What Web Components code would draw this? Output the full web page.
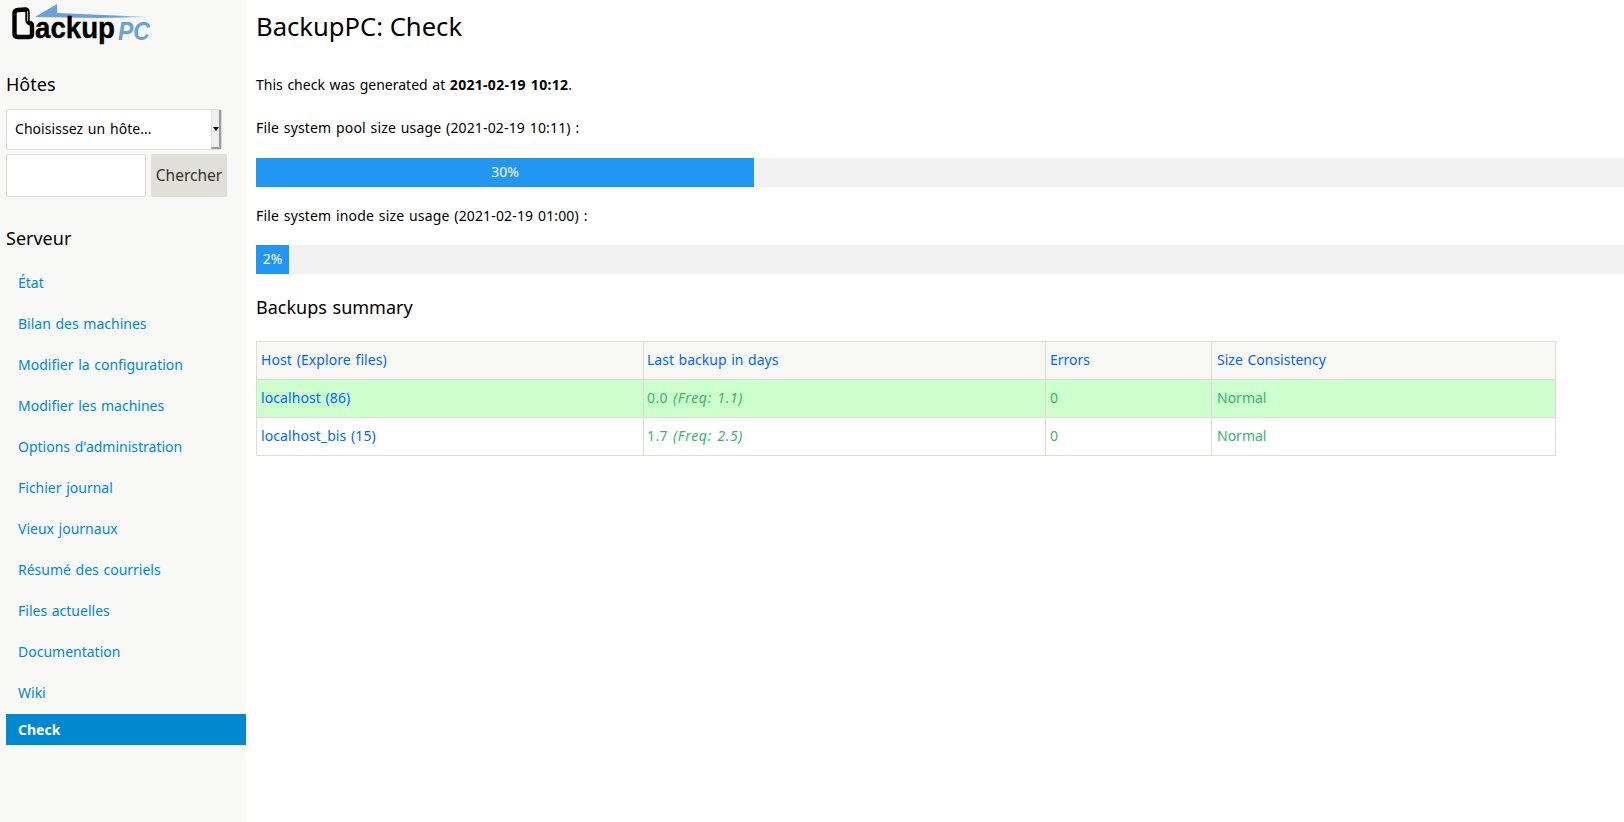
<!doctype html>
<html>
<head>
<meta charset="utf-8">
<title>BackupPC: Check</title>
<style>
  html, body { margin: 0; height: 100%; }
  body { font-family: "Noto Sans", sans-serif; font-size: 14px; word-spacing: 1px; color: #000; background: #fff; }
</style>
</head>
<body>
<bpc-app>
  <bpc-sidebar slot="side">
    <bpc-logo></bpc-logo>
    <bpc-heading>Hôtes</bpc-heading>
    <bpc-host-form></bpc-host-form>
    <bpc-heading style="padding-bottom:17px">Serveur</bpc-heading>
    <bpc-nav-item>État</bpc-nav-item>
    <bpc-nav-item>Bilan des machines</bpc-nav-item>
    <bpc-nav-item>Modifier la configuration</bpc-nav-item>
    <bpc-nav-item>Modifier les machines</bpc-nav-item>
    <bpc-nav-item>Options d'administration</bpc-nav-item>
    <bpc-nav-item>Fichier journal</bpc-nav-item>
    <bpc-nav-item>Vieux journaux</bpc-nav-item>
    <bpc-nav-item>Résumé des courriels</bpc-nav-item>
    <bpc-nav-item>Files actuelles</bpc-nav-item>
    <bpc-nav-item>Documentation</bpc-nav-item>
    <bpc-nav-item>Wiki</bpc-nav-item>
    <bpc-nav-item active>Check</bpc-nav-item>
  </bpc-sidebar>
  <bpc-check-page></bpc-check-page>
</bpc-app>
<script>
// small helper, every component below is just a style + markup string
class Base extends HTMLElement {
  connectedCallback() {
    if (this.shadowRoot) return;
    this.attachShadow({ mode: "open" });
    this.shadowRoot.innerHTML = this.render();
  }
}

class BpcApp extends Base {
  render() {
    return `
      <style>
        :host { display: flex; width: 100%; height: 822px; overflow: hidden; }
        .main { flex: 1; min-width: 0; }
      </style>
      <slot name="side"></slot>
      <div class="main"><slot></slot></div>
    `;
  }
}

class BpcSidebar extends Base {
  render() {
    return `
      <style>
        :host { display: block; box-sizing: border-box; width: 246px; flex: none; height: 822px; padding-left: 6px; background: #f8f8f6; }
      </style>
      <slot></slot>
    `;
  }
}

class BpcLogo extends Base {
  render() {
    return `
      <style>
        :host { display: block; height: 50px; margin-left: -6px; }
        svg { display: block; }
        text { font-family: "Liberation Sans", sans-serif; font-weight: 700; word-spacing: 0; }
      </style>
      <svg width="160" height="50" viewBox="0 0 160 50">
        <defs>
          <linearGradient id="wedge" x1="0" x2="1" y1="0" y2="0">
            <stop offset="0" stop-color="#6a9fd8"/>
            <stop offset="0.7" stop-color="#6a9fd8"/>
            <stop offset="1" stop-color="#c4d8ee"/>
          </linearGradient>
        </defs>
        <path d="M35 17 L57 4 L57 13 L150 17 L100 18 Z" fill="url(#wedge)"/>
        <path d="M14.5 13 V34 Q14.5 37 18 37 H29 Q32 37 32 34 V26 Q32 23 29 23 Q27.5 22 27.5 20 V12 Q27.5 9.5 25 9.5 L18 10 Q14.5 10.5 14.5 13 Z" fill="none" stroke="#000" stroke-width="4.4" stroke-linejoin="round"/>
        <path d="M27.6 11 V21" stroke="#fff" stroke-width="0.8"/>
        <text x="35" y="38" font-size="30" fill="#000" stroke="#000" stroke-width="0.4" textLength="80" lengthAdjust="spacingAndGlyphs">ackup</text>
        <text x="118" y="40" font-size="26" font-style="italic" fill="#6a9fd8" textLength="32" lengthAdjust="spacingAndGlyphs">PC</text>
      </svg>
    `;
  }
}

class BpcHeading extends Base {
  render() {
    return `
      <style>
        :host { display: block; font-size: 18px; line-height: 24px; color: #000; padding-top: 22px; padding-bottom: 13px; word-spacing: 0; }
      </style>
      <slot></slot>
    `;
  }
}

class BpcHostForm extends Base {
  render() {
    return `
      <style>
        :host { display: flex; flex-direction: column; gap: 4px; padding-bottom: 7px; }
        .select { box-sizing: border-box; width: 216px; height: 41px; display: flex; align-items: center; background: #fff; border: 1px solid #dcdcdc; border-radius: 2px; }
        .select span { flex: 1; padding-left: 8px; padding-bottom: 2px; font-size: 14px; letter-spacing: .05px; }
        .arrow { box-sizing: border-box; width: 10px; height: 39px; background: #f0f0f0; border-left: 1px solid #e0e0e0; border-right: 2px solid #9a9a9a; border-bottom: 2px solid #9a9a9a; display: flex; align-items: center; justify-content: center; }
        .arrow i { width: 0; height: 0; border: 3px solid transparent; border-top: 4px solid #000; border-bottom: 0; }
        .row { display: flex; gap: 5px; }
        .input { box-sizing: border-box; width: 140px; height: 43px; background: #fff; border: 1px solid #dcdcdc; border-radius: 2px; }
        .btn { box-sizing: border-box; width: 76px; height: 43px; padding-bottom: 2px; display: flex; align-items: center; justify-content: center; background: #e0e0d8; border-radius: 2px; color: #333; font-size: 15.5px; }
      </style>
      <div class="select"><span>Choisissez un hôte...</span><div class="arrow"><i></i></div></div>
      <div class="row"><div class="input"></div><div class="btn">Chercher</div></div>
    `;
  }
}

class BpcNavItem extends Base {
  render() {
    return `
      <style>
        :host { display: block; box-sizing: border-box; height: 31px; line-height: 31px; margin-bottom: 10px; padding-left: 12px; color: #0088d0; font-size: 14px; white-space: nowrap; }
        :host([active]) { margin-top: -4px; background: #0088d0; color: #fff; font-weight: 700; }
      </style>
      <slot></slot>
    `;
  }
}

class BpcProgress extends Base {
  render() {
    const w = this.getAttribute("width");
    return `
      <style>
        :host { display: block; height: 29px; background: #f1f1f1; }
        .fill { height: 100%; width: ${w}; background: #2196f3; color: #fff; text-align: center; line-height: 27px; font-size: 14px; }
      </style>
      <div class="fill">${this.getAttribute("label")}</div>
    `;
  }
}

class BpcSummaryTable extends Base {
  render() {
    const rows = [
      ["localhost (86)", "0.0", "(Freq: 1.1)", "0", "Normal", true],
      ["localhost_bis (15)", "1.7", "(Freq: 2.5)", "0", "Normal", false],
    ];
    return `
      <style>
        :host { display: block; width: 95%; }
        table { width: 100%; border-collapse: collapse; table-layout: fixed; font-size: 14px; }
        th, td { border: 1px solid #ddddd5; height: 38px; padding: 0 4px 2px; text-align: left; font-weight: 400; box-sizing: border-box; }
        th:nth-child(2), td:nth-child(2) { padding-left: 3px; }
        th:nth-child(4), td:nth-child(4) { padding-left: 5px; }
        td:nth-child(2) { letter-spacing: .4px; }
        th { background: #f8f8f4; color: #0066ff; }
        th:first-child, .host { letter-spacing: .08px; }
        .host { color: #0066ff; }
        td { color: #3cb371; }
        em { letter-spacing: .7px; }
        .ok td { background: #ccffcc; }
        .ok td.host { color: #0066ff; }
      </style>
      <table>
        <colgroup><col style="width:387px"><col style="width:402px"><col style="width:166px"><col></colgroup>
        <tr><th>Host (Explore files)</th><th>Last backup in days</th><th>Errors</th><th>Size Consistency</th></tr>
        ${rows.map((r) => `
          <tr class="${r[5] ? "ok" : ""}">
            <td class="host">${r[0]}</td><td>${r[1]} <em>${r[2]}</em></td><td>${r[3]}</td><td>${r[4]}</td>
          </tr>`).join("")}
      </table>
    `;
  }
}

class BpcCheckPage extends Base {
  render() {
    return `
      <style>
        :host { display: block; padding-left: 10px; }
        h1 { margin: 0; padding-top: 8px; font-size: 25.6px; line-height: 38px; font-weight: 400; word-spacing: 0; }
        p { margin: 0; line-height: 20px; letter-spacing: .15px; }
        p.gen { letter-spacing: 0; }
        b { letter-spacing: .3px; }
        h2 { margin: 0; font-size: 18px; line-height: 24px; font-weight: 400; }
      </style>
      <h1>BackupPC: Check</h1>
      <p class="gen" style="margin-top:29px">This check was generated at <b>2021-02-19 10:12</b>.</p>
      <p style="margin-top:23px">File system pool size usage (2021-02-19 10:11) :</p>
      <bpc-progress style="margin-top:20px" width="498px" label="30%"></bpc-progress>
      <p style="margin-top:19px">File system inode size usage (2021-02-19 01:00) :</p>
      <bpc-progress style="margin-top:19px" width="33px" label="2%"></bpc-progress>
      <h2 style="margin-top:21px">Backups summary</h2>
      <bpc-summary-table style="margin-top:22px"></bpc-summary-table>
    `;
  }
}

customElements.define("bpc-app", BpcApp);
customElements.define("bpc-sidebar", BpcSidebar);
customElements.define("bpc-logo", BpcLogo);
customElements.define("bpc-heading", BpcHeading);
customElements.define("bpc-host-form", BpcHostForm);
customElements.define("bpc-nav-item", BpcNavItem);
customElements.define("bpc-progress", BpcProgress);
customElements.define("bpc-summary-table", BpcSummaryTable);
customElements.define("bpc-check-page", BpcCheckPage);
</script>
</body>
</html>
